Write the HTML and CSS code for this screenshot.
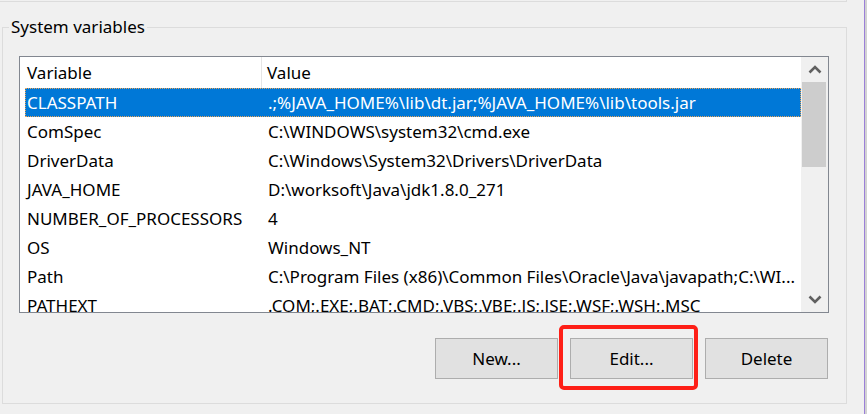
FILE: index.html
```html
<!DOCTYPE html>
<html lang="en">
<head>
<meta charset="utf-8">
<title>System variables</title>
<link rel="stylesheet" href="styles.css">
</head>
<body>
<div class="screen">
  <div class="content">
    <div class="prev-group"></div>
    <fieldset class="group">
      <legend class="group-title">System variables</legend>
      <div class="listview">
        <div class="list-main">
          <div class="list-header">
            <div class="hcell hcell-var">Variable</div>
            <div class="hcell hcell-val">Value</div>
          </div>
          <div class="row selected"><span class="c1">CLASSPATH</span><span class="c2">.;%JAVA_HOME%\lib\dt.jar;%JAVA_HOME%\lib\tools.jar</span></div>
          <div class="row"><span class="c1">ComSpec</span><span class="c2">C:\WINDOWS\system32\cmd.exe</span></div>
          <div class="row"><span class="c1">DriverData</span><span class="c2">C:\Windows\System32\Drivers\DriverData</span></div>
          <div class="row"><span class="c1">JAVA_HOME</span><span class="c2">D:\worksoft\Java\jdk1.8.0_271</span></div>
          <div class="row"><span class="c1">NUMBER_OF_PROCESSORS</span><span class="c2">4</span></div>
          <div class="row"><span class="c1">OS</span><span class="c2">Windows_NT</span></div>
          <div class="row"><span class="c1">Path</span><span class="c2">C:\Program Files (x86)\Common Files\Oracle\Java\javapath;C:\WI...</span></div>
          <div class="row"><span class="c1">PATHEXT</span><span class="c2">.COM;.EXE;.BAT;.CMD;.VBS;.VBE;.JS;.JSE;.WSF;.WSH;.MSC</span></div>
        </div>
        <div class="scrollbar">
          <div class="sb-btn">
            <svg width="14" height="9" viewBox="0 0 14 9"><polyline points="1.5,7.5 7,2 12.5,7.5" fill="none" stroke="#606060" stroke-width="2.6"/></svg>
          </div>
          <div class="sb-thumb"></div>
          <div class="sb-track"></div>
          <div class="sb-btn">
            <svg width="14" height="9" viewBox="0 0 14 9"><polyline points="1.5,1.5 7,7 12.5,1.5" fill="none" stroke="#606060" stroke-width="2.6"/></svg>
          </div>
        </div>
      </div>
      <div class="buttons">
        <button class="btn">New...</button>
        <button class="btn btn-highlight">Edit...</button>
        <button class="btn">Delete</button>
      </div>
    </fieldset>
  </div>
  <div class="edge"></div>
  <div class="outside"></div>
</div>
</body>
</html>
```
FILE: styles.css
```css
html, body {
  margin: 0;
  padding: 0;
}
body {
  background: #f0f0f0;
  font-family: "Noto Sans", "Open Sans", sans-serif;
  font-size: 17px;
  color: #000;
  overflow: hidden;
}
.screen {
  display: flex;
  width: 867px;
  height: 414px;
}
.content {
  flex: 0 0 864px;
  background: #f0f0f0;
}
.edge {
  flex: 0 0 1px;
  background: #9b7fd8;
}
.outside {
  flex: 1;
  background: #d2d2d2;
}
.prev-group {
  width: 846px;
  height: 1px;
  border-bottom: 1px solid #dcdcdc;
  border-right: 1px solid #dcdcdc;
}
.group {
  margin: 15px 0 0 2px;
  width: 845px;
  box-sizing: border-box;
  border: 1px solid #dcdcdc;
  padding: 19px 17px 24px 16px;
  min-width: 0;
}
.group-title {
  margin-left: -10px;
  padding: 0 2px;
  line-height: 20px;
  height: 20px;
}
.listview {
  display: flex;
  height: 257px;
  box-sizing: border-box;
  border: 1px solid #828790;
  background: #fff;
  overflow: hidden;
}
.list-main {
  flex: 1;
  min-width: 0;
  padding-left: 5px;
  overflow: hidden;
}
.list-header {
  display: grid;
  grid-template-columns: 237px 1fr;
  height: 31px;
  line-height: 31px;
}
.hcell {
  white-space: nowrap;
}
.hcell-var {
  padding-left: 2px;
  border-right: 1px solid #e5e5e5;
}
.hcell-val {
  padding-left: 5px;
}
.row {
  display: grid;
  grid-template-columns: 237px 1fr;
  height: 29px;
  line-height: 29px;
  white-space: nowrap;
  box-sizing: border-box;
}
.row .c1 {
  padding-left: 2px;
  overflow: hidden;
}
.row .c2 {
  padding-left: 6px;
  overflow: hidden;
}
.row.selected {
  background: #0078d7;
  color: #fff;
  outline: 1px dotted #e9a55a;
  outline-offset: -1px;
}
.scrollbar {
  flex: 0 0 27px;
  display: flex;
  flex-direction: column;
  background: #f0f0f0;
}
.sb-btn {
  height: 25px;
  display: flex;
  align-items: center;
  justify-content: center;
  padding-left: 0px;
}
.sb-thumb {
  height: 85px;
  margin: 0 2px 0 1px;
  background: #cdcdcd;
}
.sb-track {
  flex: 1;
}
.buttons {
  display: flex;
  justify-content: flex-end;
  gap: 12px;
  margin-top: 25px;
  padding-right: 1px;
}
.btn {
  width: 123px;
  height: 41px;
  box-sizing: border-box;
  border: 1px solid #adadad;
  background: #e1e1e1;
  font-family: inherit;
  font-size: 17px;
  color: #000;
  padding: 0;
}
.btn-highlight {
  position: relative;
}
.btn-highlight::after {
  content: "";
  position: absolute;
  left: -12px;
  top: -14px;
  right: -6px;
  bottom: -12px;
  border: 4px solid #fe1f17;
  border-radius: 5px;
}
```
